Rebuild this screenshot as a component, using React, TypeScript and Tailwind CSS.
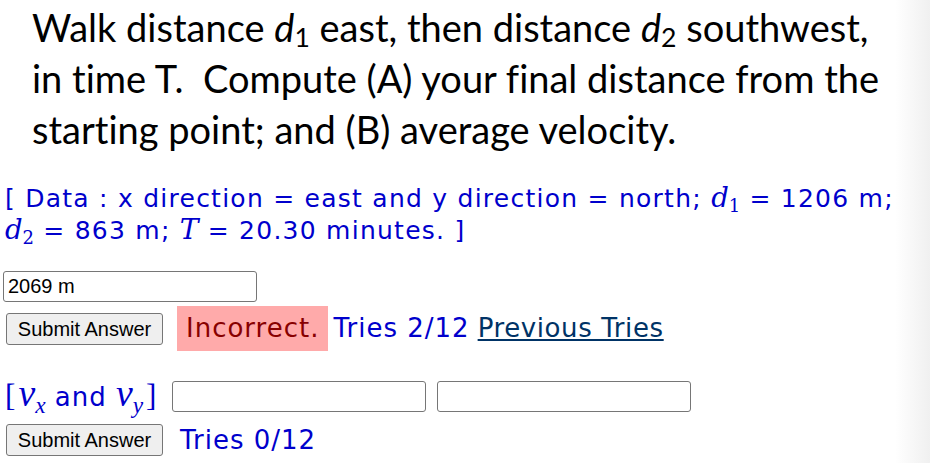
import React from "react";

const serif = '"DejaVu Serif", "Liberation Serif", serif';
const lserif = '"Liberation Serif", "DejaVu Serif", serif';

const MathV = ({ sub }: { sub: string }) => (
  <span className="whitespace-nowrap tracking-normal leading-none" style={{ fontFamily: lserif }}>
    <span className="italic text-[1.45em]">v</span>
    <span className="relative top-[0.3em] text-[0.9em] leading-none italic">{sub}</span>
  </span>
);

const MathT = () => (
  <span className="whitespace-nowrap tracking-normal leading-none" style={{ fontFamily: serif }}>
    <span className="italic text-[1.12em]">T</span>
  </span>
);

const MathD = ({ sub }: { sub: string }) => (
  <span className="whitespace-nowrap tracking-normal leading-none" style={{ fontFamily: serif }}>
    <span className="italic text-[1.1em]">d</span>
    <span className="relative top-[0.3em] text-[0.72em] leading-none">{sub}</span>
  </span>
);

export default function App() {
  return (
    <div className="flex w-[930px] h-[463px] overflow-hidden bg-white">
      <div className="flex-1 min-w-0">
        <div
          className="pl-[32px] pt-[2px] text-[38px] leading-[51px] text-black [font-variant-ligatures:none]"
          style={{ fontFamily: 'Lato, "Noto Sans", sans-serif' }}
        >
          Walk distance <span className="italic">d</span>
          <span className="relative top-[0.2em] text-[0.7em] leading-none">1</span> east, then distance{" "}
          <span className="italic">d</span>
          <span className="relative top-[0.2em] text-[0.7em] leading-none">2</span> southwest,
          <br />
          in time T.&nbsp; Compute (A) your final distance from the
          <br />
          starting point; and (B) average velocity.
        </div>

        <div
          className="pl-[5px] mt-[28px] text-[25px] leading-[32px] tracking-[1.25px] text-[#0000cc] whitespace-nowrap"
          style={{ fontFamily: '"DejaVu Sans", Verdana, sans-serif' }}
        >
          <div>
            [ Data : x direction = east and y direction = north; <MathD sub="1" /> = 1206 m;
          </div>
          <div>
            <MathD sub="2" /> = 863 m; <MathT /> = 20.30 minutes. ]
          </div>
        </div>

        <div className="pl-[3px] mt-[24px]">
          <input
            defaultValue="2069 m"
            className="block w-[254px] h-[31px] border border-[#767676] rounded-[3px] px-[4px] text-[20px] text-black"
            style={{ fontFamily: '"Liberation Sans", Arial, sans-serif' }}
          />
        </div>

        <div className="flex items-center h-[45px] pl-[6px] mt-[4px]">
          <button
            className="w-[157px] h-[32px] border border-[#767676] rounded-[3px] bg-[#efefef] text-[20px] text-black"
            style={{ fontFamily: '"Liberation Sans", Arial, sans-serif' }}
          >
            Submit Answer
          </button>
          <div
            className="flex items-center text-[26px]"
            style={{ fontFamily: '"DejaVu Sans", Verdana, sans-serif' }}
          >
            <span className="ml-[14px] h-[45px] px-[9px] flex items-center bg-[#ffaaaa] text-[#880000] tracking-[1px]">
              Incorrect.
            </span>
            <span className="ml-[5px] text-[#0000cc] tracking-[1px]">Tries 2/12</span>
            <span className="ml-[8px] text-[#003366] underline tracking-[0.6px]">Previous Tries</span>
          </div>
        </div>

        <div
          className="flex items-center h-[36px] pl-[5px] mt-[27px] text-[26px] text-[#0000cc] tracking-[1px]"
          style={{ fontFamily: '"DejaVu Sans", Verdana, sans-serif' }}
        >
          <span className="whitespace-nowrap">
            <span className="text-[1.2em] mr-[2px]" style={{ fontFamily: lserif }}>[</span>
            <MathV sub="x" /> and <MathV sub="y" />
            <span className="text-[1.2em] ml-[3px]" style={{ fontFamily: lserif }}>]</span>
          </span>
          <input className="ml-[15px] w-[254px] h-[31px] border border-[#767676] rounded-[3px]" />
          <input className="ml-[11px] w-[254px] h-[31px] border border-[#767676] rounded-[3px]" />
        </div>

        <div className="flex items-center h-[32px] pl-[6px] mt-[10px]">
          <button
            className="w-[157px] h-[32px] border border-[#767676] rounded-[3px] bg-[#efefef] text-[20px] text-black"
            style={{ fontFamily: '"Liberation Sans", Arial, sans-serif' }}
          >
            Submit Answer
          </button>
          <span
            className="ml-[17px] text-[26px] text-[#0000cc] tracking-[1px]"
            style={{ fontFamily: '"DejaVu Sans", Verdana, sans-serif' }}
          >
            Tries 0/12
          </span>
        </div>
      </div>
      <div className="w-[35px] shrink-0 bg-gradient-to-r from-white to-[#f0f0f0]" />
    </div>
  );
}
